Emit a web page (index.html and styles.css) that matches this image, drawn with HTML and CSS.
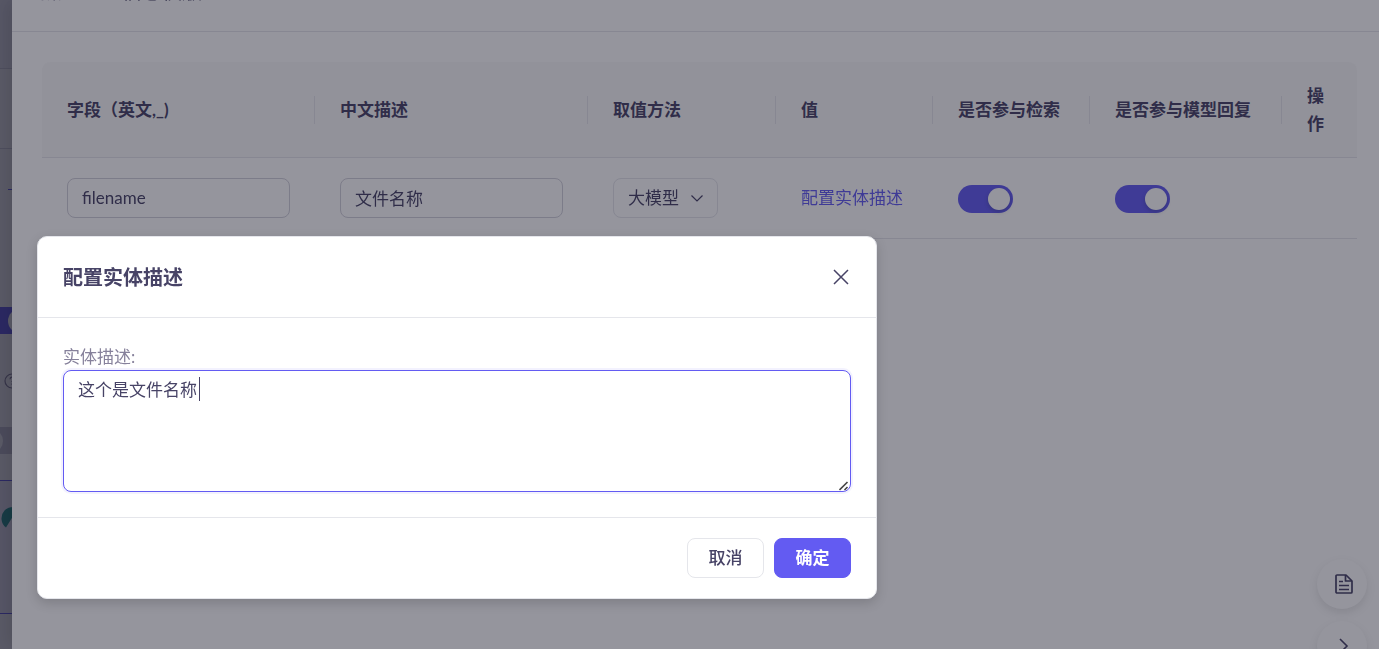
FILE: index.html
```html
<!doctype html>
<html lang="zh-CN">
<head>
  <meta charset="utf-8">
  <title>配置实体描述</title>
  <meta name="viewport" content="width=device-width, initial-scale=1">
  <link rel="stylesheet" href="styles.css">
</head>
<body>

  <!-- Page derrière le tiroir -->
  <div class="page" aria-hidden="true">
    <div class="page-row row-top"></div>
    <div class="page-row row-head"></div>
    <div class="page-row row-tabs"><span class="tab-line"></span></div>
    <div class="page-row row-on"><span class="knob"></span></div>
    <div class="page-row row-help">
      <svg width="16" height="16" viewBox="0 0 16 16" fill="none" stroke="currentColor" stroke-width="1.2"><circle cx="8" cy="8" r="7"/><path d="M6 6.2a2 2 0 1 1 2.6 1.9c-.4.2-.6.5-.6 1M8 10.600v1.200"/></svg>
    </div>
    <div class="page-row row-off"><span class="knob"></span></div>
    <div class="page-row row-gap"></div>
    <div class="page-row row-card">
      <svg width="24" height="24" viewBox="0 0 24 24" fill="#1f988f"><path d="M6 21.500A11.500 11.500 0 1 1 20 21.500L12.500 11z"/></svg>
    </div>
  </div>
  <div class="mask"></div>

  <!-- Tiroir -->
  <section class="drawer">
    <header class="drawer-head">
      <h2 class="drawer-title"><span>新建</span>信息模版</h2>
    </header>
    <div class="drawer-body">
      <table class="fields">
        <colgroup>
          <col class="c-field"><col class="c-desc"><col class="c-method"><col class="c-value"><col class="c-search"><col class="c-reply"><col class="c-action">
        </colgroup>
        <thead>
          <tr>
            <th>字段（英文,_)</th>
            <th>中文描述</th>
            <th>取值方法</th>
            <th>值</th>
            <th>是否参与检索</th>
            <th>是否参与模型回复</th>
            <th>操作</th>
          </tr>
        </thead>
        <tbody>
          <tr>
            <td><input class="input" type="text" value="filename" aria-label="字段"></td>
            <td><input class="input" type="text" value="文件名称" aria-label="中文描述"></td>
            <td>
              <div class="select">
                <select aria-label="取值方法"><option>大模型</option></select>
                <svg width="14" height="14" viewBox="0 0 14 14" fill="none" stroke="currentColor" stroke-width="1.2"><path d="M1.500 4.500 7 10l5.500-5.500"/></svg>
              </div>
            </td>
            <td><a class="link" href="#">配置实体描述</a></td>
            <td><input class="switch" type="checkbox" checked aria-label="是否参与检索"></td>
            <td><input class="switch" type="checkbox" checked aria-label="是否参与模型回复"></td>
            <td></td>
          </tr>
        </tbody>
      </table>
    </div>
  </section>

  <!-- Boutons flottants -->
  <div class="floats">
    <button class="float-btn" type="button" aria-label="文档">
      <svg width="18" height="20" viewBox="0 0 18 20" fill="none" stroke="currentColor" stroke-width="1.7" stroke-linejoin="round"><path d="M2 1h9l6 6v11a1 1 0 0 1-1 1H2a1 1 0 0 1-1-1V2a1 1 0 0 1 1-1z"/><path d="M10.500 1v6H17M4 7.500h4M4 11.500h10M4 15.500h10"/></svg>
    </button>
    <button class="float-btn" type="button" aria-label="展开">
      <svg width="10" height="16" viewBox="0 0 10 16" fill="none" stroke="currentColor" stroke-width="1.6"><path d="m1 1 7 7-7 7"/></svg>
    </button>
  </div>
  <div class="mask"></div>

  <!-- Boîte de dialogue -->
  <form class="modal" role="dialog" aria-labelledby="modalTitle">
    <header class="modal-head">
      <h1 id="modalTitle">配置实体描述</h1>
      <button class="close" type="button" aria-label="关闭">
        <svg width="16" height="16" viewBox="0 0 16 16" fill="none" stroke="currentColor" stroke-width="1.5"><path d="m1 1 14 14M15 1 1 15"/></svg>
      </button>
    </header>
    <div class="modal-body">
      <label for="desc">实体描述:</label>
      <div class="area">
        <textarea id="desc">这个是文件名称</textarea>
        <span class="caret"></span>
        <svg class="grip" width="10" height="10" viewBox="0 0 10 10" fill="none" stroke="#444" stroke-width="1.6"><path d="M.500 9l8-8M5.500 9 8.500 6"/></svg>
      </div>
    </div>
    <footer class="modal-foot">
      <button class="btn" type="button">取消</button>
      <button class="btn btn-primary" type="submit">确定</button>
    </footer>
  </form>

</body>
</html>
```
FILE: styles.css
```css
:root{
  --brand:#635bf2; --text:#474366; --muted:#86819b;
  --line:#e5e6eb; --border:#d2d1da; --mask:rgba(19,19,37,.45);
  --radius:8px;
}
*{ box-sizing:border-box }
html,body{ height:100% }
body{ margin:0; overflow:hidden; font:17px/28px Lato,"Noto Sans CJK SC",sans-serif; background:#fff; color:var(--text); }
button,input,select,textarea{ font:inherit; color:inherit; }

.mask{ position:fixed; inset:0; background:var(--mask); }

/* ===== Page ===== */
.page{ width:100%; }
.page-row{ display:flex; align-items:center; overflow:hidden; }
.row-top{ height:69px; background:#f4f4fb; border-bottom:1px solid #d8d8e2; }
.row-head{ height:80px; border-bottom:1px solid #d8d8e2; }
.row-tabs{ height:158px; align-items:flex-start; padding:40px 0 0 8px; }
.tab-line{ width:80px; height:1px; background:var(--brand); }
.row-on{ height:27px; padding-left:8px; background:var(--brand); }
.knob{ width:24px; height:24px; border-radius:50%; background:#fff; flex:none; }
.row-help{ height:93px; padding-left:4px; color:var(--muted); }
.row-off{ height:27px; background:#cfcdda; }
.row-off .knob{ margin-left:-21px; }
.row-gap{ height:26px; }
.row-card{ height:134px; align-items:flex-start; padding:25px 0 0; background:#f3f2ff; border-top:1px solid var(--brand); border-bottom:1px solid var(--brand); }

/* ===== Drawer ===== */
.drawer{ position:fixed; top:0; right:0; bottom:0; left:12px; background:#fff; box-shadow:-6px 0 16px rgba(0,0,0,.12); overflow:hidden; }
.drawer-head{ height:32px; display:flex; align-items:flex-end; padding:0 26px 28px; border-bottom:1px solid var(--line); }
.drawer-title{ margin:0; font-size:20px; line-height:24px; font-weight:400; }
.drawer-title span{ margin-right:44px; color:var(--muted); }
.drawer-body{ padding:30px 22px 30px 30px; }

.fields{ width:100%; table-layout:fixed; border-collapse:separate; border-spacing:0; }
.c-field,.c-desc{ width:273px }
.c-method{ width:188px }
.c-value,.c-search{ width:157px }
.c-reply{ width:192px }
.fields th{ position:relative; height:96px; padding:19px 25px; text-align:left; font-weight:700; background:#fafafa; border-bottom:1px solid var(--line); }
.fields th:first-child{ border-top-left-radius:var(--radius) }
.fields th:last-child{ border-top-right-radius:var(--radius) }
.fields th:not(:last-child)::after{ content:""; position:absolute; right:0; top:34px; width:1px; height:28px; background:var(--line); }
.fields td{ height:81px; padding:20px 25px; border-bottom:1px solid var(--line); }

.input{ display:block; width:100%; height:40px; padding:0 14px 2px; border:1px solid var(--border); border-radius:var(--radius); background:transparent; outline:none; }
.select{ position:relative; width:105px; }
.select select{ appearance:none; display:block; width:100%; height:40px; padding:0 14px; border:1px solid var(--line); border-radius:var(--radius); background:transparent; }
.select svg{ position:absolute; right:14px; top:13px; pointer-events:none; }
.link{ color:var(--brand); text-decoration:none; white-space:nowrap; }

.switch{ appearance:none; display:block; width:55px; height:28px; margin:2px 0 0; padding:3px; border-radius:14px; background:var(--brand); }
.switch::before{ content:""; display:block; width:22px; height:22px; border-radius:50%; background:#fff; box-shadow:0 2px 4px rgba(0,35,11,.2); }
.switch:checked::before{ margin-left:27px; }

/* ===== Floating buttons ===== */
.floats{ position:fixed; right:12px; top:559px; display:flex; flex-direction:column; gap:12px; }
.float-btn{ width:50px; height:50px; padding:0 0 0 3px; display:flex; align-items:center; justify-content:center; border:0; border-radius:50%; background:#fff; box-shadow:0 4px 10px rgba(0,0,0,.1); }

/* ===== Modal ===== */
.modal{ position:fixed; top:236px; left:37px; width:840px; max-width:calc(100% - 74px); background:#fff; border:1px solid var(--line); border-radius:10px; box-shadow:0 4px 12px rgba(0,0,0,.16); }
.modal-head{ height:81px; display:flex; align-items:center; justify-content:space-between; padding:0 25px; border-bottom:1px solid var(--line); }
.modal-head h1{ margin:0; font-size:20px; line-height:28px; }
.close{ width:20px; height:20px; padding:0; display:flex; align-items:center; justify-content:center; border:0; background:none; cursor:pointer; }
.modal-body{ padding:25px; }
.modal-body label{ display:block; height:27px; color:var(--muted); }
.area{ position:relative; }
.area textarea{ display:block; width:100%; height:122px; padding:5px 14px; border:1px solid var(--brand); border-radius:var(--radius); outline:none; resize:none; box-shadow:0 0 0 2px rgba(101,91,246,.08); }
.caret{ position:absolute; left:136px; top:7px; width:1px; height:24px; background:var(--text); }
.grip{ position:absolute; right:2px; bottom:1px; pointer-events:none; }
.modal-foot{ display:flex; justify-content:flex-end; gap:10px; padding:20px 25px; border-top:1px solid var(--line); }
.btn{ width:77px; height:40px; padding:0; border:1px solid var(--line); border-radius:var(--radius); background:#fff; font-weight:500; cursor:pointer; }
.btn-primary{ border-color:var(--brand); background:var(--brand); color:#fff; font-weight:700; }
```
